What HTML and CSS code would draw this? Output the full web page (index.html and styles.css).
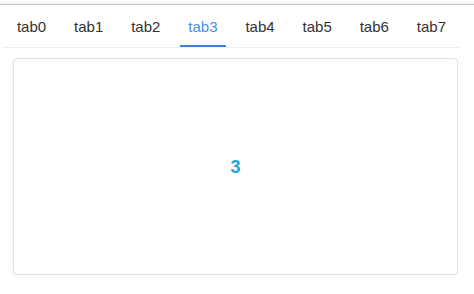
FILE: index.html
```html
<!DOCTYPE html>
<html>
    <head>
        <link rel="stylesheet" href="styles.css">
    </head>
    <body>
        <div class="topbar"></div>
        <div class="tabs">
            <div class="tab">tab0</div>
            <div class="tab">tab1</div>
            <div class="tab">tab2</div>
            <div class="tab active">tab3</div>
            <div class="tab">tab4</div>
            <div class="tab">tab5</div>
            <div class="tab">tab6</div>
            <div class="tab">tab7</div>
        </div>
        <div class="panel">
            <div class="content">3</div>
        </div>
    </body>
</html>
```

FILE: styles.css
```css
body {
    margin: 0;
    font-family: "Liberation Sans", Arial, sans-serif;
    background: #fff;
}

.topbar {
    height: 4px;
    background: linear-gradient(#fff, #f2f2f2);
    border-bottom: 1px solid #c8c8c8;
}

.tabs {
    display: flex;
    margin-left: 3px;
    width: 457px;
    height: 43px;
    border-bottom: 1px solid #eeeeee;
    box-sizing: border-box;
}

.tab {
    flex: 1;
    display: flex;
    align-items: center;
    justify-content: center;
    font-size: 15px;
    color: #333;
    position: relative;
    padding-top: 1px;
}

.active {
    color: #4a8fe7;
}

.active::after {
    content: "";
    position: absolute;
    left: 10%;
    right: 10%;
    bottom: 0;
    height: 2px;
    background: #3d7fe0;
}

.panel {
    margin: 10px 0 0 13px;
    width: 445px;
    height: 217px;
    box-sizing: border-box;
    border: 1px solid #e2e2e2;
    border-radius: 4px;
    box-shadow: 0 1px 2px rgba(0, 0, 0, 0.12);
    display: flex;
    align-items: center;
    justify-content: center;
}

.content {
    font-size: 18px;
    font-weight: bold;
    color: #1ea5de;
    padding-top: 2px;
}
```
